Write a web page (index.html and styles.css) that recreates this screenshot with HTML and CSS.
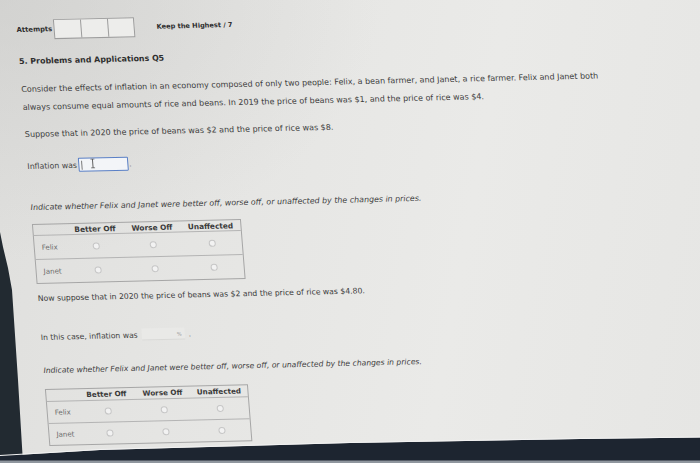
FILE: index.html
```html
<!DOCTYPE html>
<html lang="en">
<head>
<meta charset="utf-8">
<title>Problems and Applications Q5</title>
<link rel="stylesheet" href="styles.css">
</head>
<body>
<main class="page">
  <div class="attempts">
    <span class="att-label">Attempts</span>
    <div class="att-boxes"><span class="att-box"></span><span class="att-box"></span><span class="att-box"></span></div>
    <span class="keep">Keep the Highest / 7</span>
  </div>

  <h2 class="qtitle">5. Problems and Applications Q5</h2>

  <p class="para">Consider the effects of inflation in an economy composed of only two people: Felix, a bean farmer, and Janet, a rice farmer. Felix and Janet both<br>always consume equal amounts of rice and beans. In 2019 the price of beans was $1, and the price of rice was $4.</p>

  <p class="suppose">Suppose that in 2020 the price of beans was $2 and the price of rice was $8.</p>

  <div class="infl">
    <span>Inflation was</span>
    <span class="input-active">
      <span class="caret"></span>
      <svg class="ibeam" width="5" height="10" viewBox="0 0 5 10"><path d="M0.5 0.5 H4.5 M2.5 0.5 V9.5 M0.5 9.5 H4.5" stroke="#555" stroke-width="0.9" fill="none"/></svg>
    </span>
    <span class="dot">.</span>
  </div>

  <p class="indicate">Indicate whether Felix and Janet were better off, worse off, or unaffected by the changes in prices.</p>

  <div class="tbl tbl-one">
    <div class="trow thead"><span></span><span>Better Off</span><span>Worse Off</span><span>Unaffected</span></div>
    <div class="trow tbody"><span class="who">Felix</span><span><i class="radio"></i></span><span><i class="radio"></i></span><span><i class="radio"></i></span></div>
    <div class="trow tbody"><span class="who">Janet</span><span><i class="radio"></i></span><span><i class="radio"></i></span><span><i class="radio"></i></span></div>
  </div>

  <p class="now">Now suppose that in 2020 the price of beans was $2 and the price of rice was $4.80.</p>

  <div class="case">
    <span>In this case, inflation was</span>
    <span class="input-faint"><span class="pct">%</span></span>
    <span class="dot">.</span>
  </div>

  <p class="indicate indicate-two">Indicate whether Felix and Janet were better off, worse off, or unaffected by the changes in prices.</p>

  <div class="tbl tbl-two">
    <div class="trow thead"><span></span><span>Better Off</span><span>Worse Off</span><span>Unaffected</span></div>
    <div class="trow tbody"><span class="who">Felix</span><span><i class="radio"></i></span><span><i class="radio"></i></span><span><i class="radio"></i></span></div>
    <div class="trow tbody"><span class="who">Janet</span><span><i class="radio"></i></span><span><i class="radio"></i></span><span><i class="radio"></i></span></div>
  </div>
</main>

<svg class="bezel" width="700" height="463" viewBox="0 0 700 463" aria-hidden="true">
  <polygon points="0,232 3,247 8,268 12,290 18,380 23,463 0,463" fill="#222a31"/>
  <polygon points="0,456 100,450 350,443 580,439 700,437.5 700,463 0,463" fill="#1d2530"/>
  <polyline points="0,455.5 100,449.5 350,442.5 580,438.5 700,437" fill="none" stroke="#f2f2f2" stroke-width="1"/>
  <rect x="0" y="460.5" width="700" height="2.5" fill="#8f969e"/>
</svg>
</body>
</html>
```

FILE: styles.css
```css
html, body {
  margin: 0;
  padding: 0;
  width: 700px;
  height: 463px;
  overflow: hidden;
}

body {
  background:
    radial-gradient(ellipse 380px 260px at 0px 0px, rgba(200,200,198,0.55), rgba(200,200,198,0) 100%),
    linear-gradient(100deg, #dfdfdd 0%, #e5e5e3 30%, #eaeae8 65%, #e6e6e4 100%);
  font-family: "DejaVu Sans", Verdana, sans-serif;
  color: #3c3c3c;
  font-size: 7.8px;
}

.page {
  padding: 20px 0 0 19px;
  transform: skew(4.5deg, -1.35deg);
  transform-origin: 19px 60px;
}

p, h2 { margin: 0; }

/* attempts row */
.attempts {
  display: flex;
  align-items: center;
  height: 20px;
  font-size: 6.8px;
}
.att-label {
  width: 37px;
  font-weight: bold;
  color: #2e2e2e;
}
.att-boxes {
  display: flex;
  height: 18px;
  border: 1px solid #9c9c9c;
  background: #ededeb;
}
.att-box { width: 26px; }
.att-box + .att-box { border-left: 1px solid #9c9c9c; width: 25.5px; }
.keep {
  margin-left: 22px;
  font-weight: bold;
  color: #2e2e2e;
  font-size: 6.6px;
}

.qtitle {
  margin-top: 16px;
  font-size: 7.9px;
  line-height: 12px;
  font-weight: bold;
  color: #2f2f2f;
}

.para {
  margin-top: 13px;
  line-height: 18px;
  font-size: 8px;
}

.suppose {
  margin-top: 12px;
  line-height: 12px;
  font-size: 8px;
}

.infl {
  margin-top: 17px;
  height: 16px;
  display: flex;
  align-items: center;
  color: #444;
}
.input-active {
  margin-left: 1px;
  width: 46px;
  height: 12px;
  border: 1.6px solid #5b80c6;
  border-radius: 1px;
  background: #f3f5f8;
  display: flex;
  align-items: center;
  padding-left: 2px;
  gap: 8px;
}
.caret {
  width: 1px;
  height: 9px;
  background: #7a7a7a;
}
.ibeam { margin-top: -3px; }
.dot { margin-left: 1px; color: #777; }

.indicate {
  margin-top: 28px;
  line-height: 12px;
  font-style: italic;
  color: #3e3e3e;
  font-size: 7.9px;
}

/* option tables */
.tbl {
  margin-top: 10px;
  width: 207px;
  border: 1px solid #a6a6a6;
}
.trow {
  display: grid;
  grid-template-columns: 33px 57px 57px 60px;
  align-items: center;
}
.trow > span { text-align: center; }
.thead {
  height: 10px;
  font-weight: bold;
  color: #3a3a3a;
  font-size: 7.4px;
}
.tbody {
  height: 23px;
  border-top: 1px solid #b4b4b4;
}
.tbody > .who {
  text-align: left;
  padding-left: 7px;
  color: #6a6a6a;
  font-size: 7px;
}
.radio {
  display: inline-block;
  width: 5px;
  height: 5px;
  border: 1px solid #c6c6c6;
  border-radius: 50%;
  background: #f2f2f2;
  vertical-align: middle;
}

.now {
  margin-top: 9px;
  line-height: 12px;
  font-size: 7.7px;
}

.case {
  margin-top: 26px;
  height: 12px;
  display: flex;
  align-items: center;
  color: #444;
  font-size: 7.65px;
}
.input-faint {
  margin-left: 4px;
  width: 43px;
  height: 11px;
  border-bottom: 1px solid #d9d9d7;
  background: #e9e9e7;
  display: flex;
  align-items: center;
  justify-content: flex-end;
}
.pct {
  font-size: 5px;
  color: #9a9a9a;
  margin-right: 3px;
}
.case .dot { margin-left: 4px; }

.indicate-two { margin-top: 22px; font-size: 7.65px; }

.tbl-two {
  margin-top: 12px;
  width: 201px;
}
.tbl-two .trow { grid-template-columns: 32px 56px 56px 57px; }
.tbl-two .thead { height: 11px; font-size: 7.2px; }
.tbl-two .tbody { height: 21px; }

.bezel {
  position: fixed;
  left: 0;
  top: 0;
  pointer-events: none;
}
```
